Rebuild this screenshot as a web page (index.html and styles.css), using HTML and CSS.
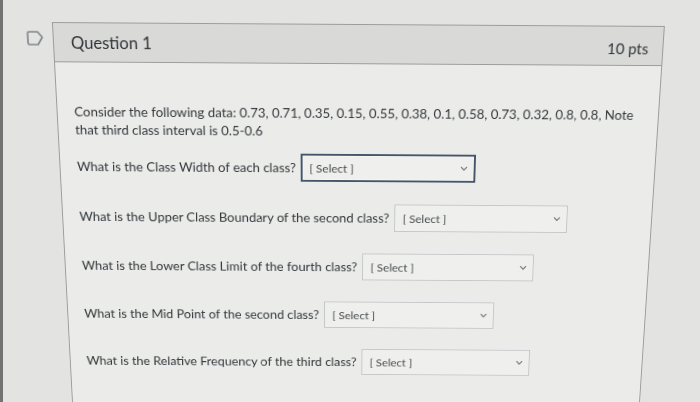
FILE: index.html
```html
<!DOCTYPE html>
<html lang="en">
<head>
<meta charset="utf-8">
<title>Question 1</title>
<link rel="stylesheet" href="styles.css">
</head>
<body>
<div class="screen">
  <div class="flag">
    <svg width="17" height="15" viewBox="0 0 17 15" aria-hidden="true">
      <path d="M2.5 1 H11 L15.5 6.5 L11 14 H2.5 Q1 14 1 12.5 V2.5 Q1 1 2.5 1 Z" fill="none" stroke="#80838a" stroke-width="1.6" stroke-linejoin="round"/>
    </svg>
  </div>
  <div class="card">
    <div class="card-header">
      <span class="q-name">Question 1</span>
      <span class="q-points">10 pts</span>
    </div>
    <div class="card-body">
      <p class="q-text">Consider the following data: 0.73, 0.71, 0.35, 0.15, 0.55, 0.38, 0.1, 0.58, 0.73, 0.32, 0.8, 0.8, Note that third class interval is 0.5-0.6</p>
      <div class="rows">
        <div class="row">
          <span class="label">What is the Class Width of each class?</span>
          <span class="select focused"><span class="select-text">[ Select ]</span><svg class="chev" width="8" height="6" viewBox="0 0 8 6"><path d="M1 1.2 L4 4.4 L7 1.2" fill="none" stroke="#6b6e72" stroke-width="1.2"/></svg></span>
        </div>
        <div class="row">
          <span class="label">What is the Upper Class Boundary of the second class?</span>
          <span class="select"><span class="select-text">[ Select ]</span><svg class="chev" width="8" height="6" viewBox="0 0 8 6"><path d="M1 1.2 L4 4.4 L7 1.2" fill="none" stroke="#6b6e72" stroke-width="1.2"/></svg></span>
        </div>
        <div class="row">
          <span class="label">What is the Lower Class Limit of the fourth class?</span>
          <span class="select"><span class="select-text">[ Select ]</span><svg class="chev" width="8" height="6" viewBox="0 0 8 6"><path d="M1 1.2 L4 4.4 L7 1.2" fill="none" stroke="#6b6e72" stroke-width="1.2"/></svg></span>
        </div>
        <div class="row">
          <span class="label">What is the Mid Point of the second class?</span>
          <span class="select"><span class="select-text">[ Select ]</span><svg class="chev" width="8" height="6" viewBox="0 0 8 6"><path d="M1 1.2 L4 4.4 L7 1.2" fill="none" stroke="#6b6e72" stroke-width="1.2"/></svg></span>
        </div>
        <div class="row">
          <span class="label">What is the Relative Frequency of the third class?</span>
          <span class="select"><span class="select-text">[ Select ]</span><svg class="chev" width="8" height="6" viewBox="0 0 8 6"><path d="M1 1.2 L4 4.4 L7 1.2" fill="none" stroke="#6b6e72" stroke-width="1.2"/></svg></span>
        </div>
      </div>
    </div>
  </div>
</div>
</body>
</html>
```
FILE: styles.css
```css
html, body {
  margin: 0;
  padding: 0;
  height: 100%;
  overflow: hidden;
}
body {
  background: #e3e4e2;
  font-family: Lato, "Noto Sans", sans-serif;
  color: #33373b;
  border-left: 3px solid #727374;
  box-sizing: border-box;
}
.screen {
  display: flex;
  align-items: flex-start;
  padding-top: 24px;
  transform-origin: 355px 24px;
  transform: perspective(800px) rotateX(-8.84deg) rotate(0.37deg);
}
.flag {
  margin-left: 23px;
  margin-top: 9px;
  width: 17px;
  height: 15px;
  display: flex;
}
.card {
  margin-left: 9px;
  width: 613px;
  box-sizing: border-box;
  border: 1px solid #9a9c9d;
  background: #ebecea;
}
.card-header {
  height: 40px;
  box-sizing: border-box;
  background: #d9dad8;
  border-bottom: 1px solid #9a9c9d;
  display: flex;
  align-items: center;
  justify-content: space-between;
  padding: 0 14px 0 17px;
}
.q-name {
  font-size: 16.6px;
  color: #2f3337;
}
.q-points {
  font-size: 15px;
  color: #2f3337;
  padding-top: 4px;
}
.card-body {
  padding: 42px 16px 50px 17px;
}
.q-text {
  margin: 0;
  font-size: 13.4px;
  line-height: 19px;
}
.rows {
  margin-top: 14px;
  display: flex;
  flex-direction: column;
  gap: 24px;
}
.row {
  display: flex;
  align-items: center;
  gap: 5px;
  height: 30px;
  font-size: 13.4px;
}
.select {
  width: 180px;
  height: 30px;
  box-sizing: border-box;
  border: 1px solid #c4c8cb;
  background: #eff0ee;
  display: flex;
  align-items: center;
  justify-content: space-between;
  padding: 0 6px 0 8px;
  font-size: 12px;
  color: #46494c;
}
.select.focused {
  border: 2px solid #45566a;
  box-shadow: inset 0 0 0 1px #f5f6f4;
  padding-left: 7px;
}
.chev {
  display: block;
}
```
